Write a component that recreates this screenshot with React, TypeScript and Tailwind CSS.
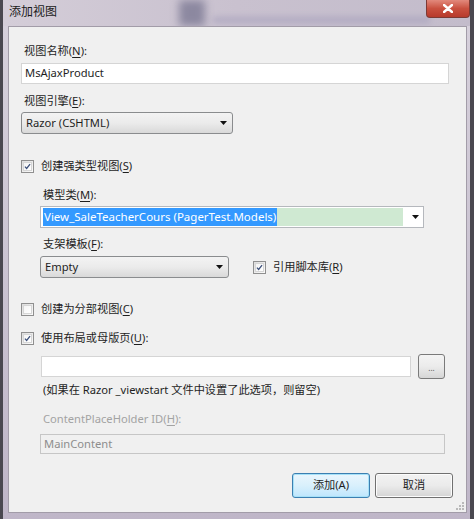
import type { ReactNode } from 'react'

const FONT = 'font-["Noto_Sans","Noto_Sans_CJK_SC",sans-serif]'

function Key({ k }: { k: string }) {
  return <span className="underline underline-offset-2">{k}</span>
}

function Label({ children, muted }: { children: ReactNode; muted?: boolean }) {
  return (
    <div className={`h-4 leading-4 ml-[3px] ${muted ? 'text-[#a3a3a3]' : 'text-[#1e1e1e]'}`}>{children}</div>
  )
}

function Check({ checked }: { checked: boolean }) {
  return (
    <span className="w-[13px] h-[13px] border border-[#8f8f8f] bg-gradient-to-br from-[#dcdcdc] to-[#fbfbfb] flex items-center justify-center shrink-0">
      <span className="w-[9px] h-[9px] bg-gradient-to-br from-[#f4f4f4] to-[#ffffff] border border-[#d6d6d6] flex items-center justify-center">
        {checked && (
          <svg width="9" height="9" viewBox="0 0 9 9">
            <path d="M1.2 4.6 L3.4 7 L7.8 1.4" fill="none" stroke="#3b4f7a" strokeWidth="1.6" />
          </svg>
        )}
      </span>
    </span>
  )
}

function CheckRow({ checked, children }: { checked: boolean; children: ReactNode }) {
  return (
    <div className="h-4 flex items-center gap-[7px]">
      <Check checked={checked} />
      <span className="leading-4 text-[#1e1e1e]">{children}</span>
    </div>
  )
}

function Arrow() {
  return (
    <svg width="7" height="4" viewBox="0 0 7 4" className="shrink-0">
      <path d="M0 0 H7 L3.5 4 Z" fill="#111" />
    </svg>
  )
}

function Dropdown({ value, width }: { value: string; width: string }) {
  return (
    <div
      className={`${width} h-[22px] border border-[#8a8c8e] rounded-[3px] bg-gradient-to-b from-[#f3f3f3] via-[#ebebeb] to-[#d9d9d9] flex items-center justify-between pl-[4px] pr-[5px] text-[#1e1e1e]`}
    >
      <span>{value}</span>
      <Arrow />
    </div>
  )
}

export default function App() {
  return (
    <div className={`${FONT} text-[11.2px] w-[474px] h-[519px] overflow-hidden bg-[#4a4850] relative`}>
      {/* window frame */}
      <div className="absolute left-[3px] right-[4px] top-0 bottom-0 bg-gradient-to-b from-[#d7d1dc] via-[#cbc4d2] to-[#bfb6c8] flex flex-col">
        {/* title bar */}
        <div className="h-[26px] shrink-0 relative bg-gradient-to-r from-[#d4cdd8] via-[#c9c1cf] to-[#c3bccb]">
          <div className="absolute left-[176px] top-0 w-[26px] h-[26px] bg-[#4e4e70] opacity-50 blur-[4px]" />
          <div className="absolute left-[210px] right-[40px] top-[17px] h-[6px] bg-[#9f9ab8] opacity-60 blur-[3px]" />
          <div className="absolute left-[6px] top-[4px] text-[12px] leading-4 text-[#1a1a1a]">添加视图</div>
          <div className="absolute right-[0px] top-0 w-[44px] h-[18px] rounded-b-[4px] border border-t-0 border-[#7d3a34] bg-gradient-to-b from-[#e2897c] via-[#c9503f] to-[#b73a2c] flex items-center justify-center">
            <svg width="10" height="9" viewBox="0 0 10 9">
              <path d="M1 1 L9 8 M9 1 L1 8" stroke="#fff" strokeWidth="2.4" strokeLinecap="round" />
            </svg>
          </div>
        </div>

        {/* client area */}
        <div className="ml-[5px] mr-[3px] h-[487px] border border-[#a29ca8] bg-[#f0f0f0] pt-[16px] pl-[12px] pr-[17px] flex flex-col relative">
          <Label>
            视图名称(<Key k="N" />):
          </Label>
          <div className="mt-[4px] h-[21px] border border-[#d5d5d5] bg-white flex items-center pl-[3px] text-[#1e1e1e]">
            MsAjaxProduct
          </div>

          <div className="mt-[9px]">
            <Label>
              视图引擎(<Key k="E" />):
            </Label>
          </div>
          <div className="mt-[3px]">
            <Dropdown value="Razor (CSHTML)" width="w-[212px]" />
          </div>

          <div className="mt-[24px]">
            <CheckRow checked>
              创建强类型视图(<Key k="S" />)
            </CheckRow>
          </div>

          <div className="ml-[19px] flex flex-col">
            <div className="mt-[13px]">
              <Label>
                模型类(<Key k="M" />):
              </Label>
            </div>
            <div className="mt-[3px] w-[384px] h-[22px] border border-[#b5b8bd] bg-white flex items-center pl-[2px] pr-[4px]">
              <div className="flex-1 h-[18px] bg-[#cfe9d2] flex items-center">
                <span className="bg-[#3399ff] text-white leading-[18px] px-[1px] text-[11.5px]">View_SaleTeacherCours (PagerTest.Models)</span>
              </div>
              <div className="w-[16px] flex justify-end">
                <Arrow />
              </div>
            </div>

            <div className="mt-[8px]">
              <Label>
                支架模板(<Key k="F" />):
              </Label>
            </div>
            <div className="mt-[4px] flex items-center">
              <Dropdown value="Empty" width="w-[189px]" />
              <div className="ml-[24px]">
                <CheckRow checked>
                  引用脚本库(<Key k="R" />)
                </CheckRow>
              </div>
            </div>
          </div>

          <div className="mt-[23px]">
            <CheckRow checked={false}>
              创建为分部视图(<Key k="C" />)
            </CheckRow>
          </div>
          <div className="mt-[13px]">
            <CheckRow checked>
              使用布局或母版页(<Key k="U" />):
            </CheckRow>
          </div>

          <div className="ml-[19px] flex flex-col">
            <div className="mt-[8px] flex items-center">
              <div className="ml-[1px] w-[370px] h-[21px] border border-[#d5d5d5] bg-white" />
              <div className="ml-[7px] w-[27px] h-[25px] border border-[#7a7a7a] rounded-[3px] bg-gradient-to-b from-[#f4f4f4] via-[#ebebeb] to-[#d6d6d6] flex items-center justify-center text-[8px] text-[#555] leading-none pt-[3px]">
                ...
              </div>
            </div>
            <div className="mt-[3px]">
              <Label>(如果在 Razor _viewstart 文件中设置了此选项，则留空)</Label>
            </div>
            <div className="mt-[13px]">
              <Label muted>
                ContentPlaceHolder ID(<Key k="H" />):
              </Label>
            </div>
            <div className="mt-[7px] w-[405px] h-[20px] border border-[#c6c6c6] bg-[#f0f0f0] flex items-center pl-[3px] text-[#8d8d8d]">
              MainContent
            </div>
          </div>

          <div className="mt-[19px] flex justify-end gap-[5px] -mr-[4px]">
            <div className="w-[78px] h-[25px] border border-[#3c7fb1] rounded-[3px] bg-gradient-to-b from-[#eaf6fd] via-[#d9f0fc] to-[#bee6fd] flex items-center justify-center text-[#1e1e1e] shadow-[inset_0_0_0_1px_#a6e1f8]">
              添加(A)
            </div>
            <div className="w-[78px] h-[25px] border border-[#707070] rounded-[3px] bg-gradient-to-b from-[#f2f2f2] via-[#ebebeb] to-[#d4d4d4] flex items-center justify-center text-[#1e1e1e] shadow-[inset_0_0_0_1px_#fcfcfc]">
              取消
            </div>
          </div>

          {/* size grip */}
          <div className="absolute right-[2px] bottom-[2px] grid grid-cols-3 gap-[1px]">
            <span className="w-[2px] h-[2px]" />
            <span className="w-[2px] h-[2px]" />
            <span className="w-[2px] h-[2px] bg-[#b9b9b9]" />
            <span className="w-[2px] h-[2px]" />
            <span className="w-[2px] h-[2px] bg-[#b9b9b9]" />
            <span className="w-[2px] h-[2px] bg-[#b9b9b9]" />
            <span className="w-[2px] h-[2px] bg-[#b9b9b9]" />
            <span className="w-[2px] h-[2px] bg-[#b9b9b9]" />
            <span className="w-[2px] h-[2px] bg-[#b9b9b9]" />
          </div>
        </div>
      </div>
    </div>
  )
}
